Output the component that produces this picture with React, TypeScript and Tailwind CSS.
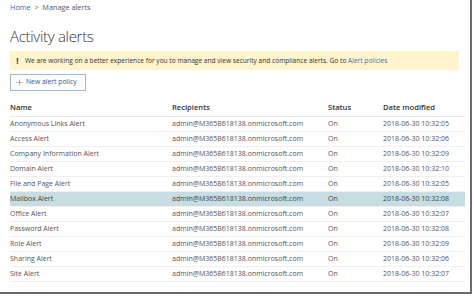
import { Plus } from 'lucide-react';

const alerts = [
  { name: 'Anonymous Links Alert', date: '2018-06-30 10:32:05' },
  { name: 'Access Alert', date: '2018-06-30 10:32:06' },
  { name: 'Company Information Alert', date: '2018-06-30 10:32:09' },
  { name: 'Domain Alert', date: '2018-06-30 10:32:10' },
  { name: 'File and Page Alert', date: '2018-06-30 10:32:05' },
  { name: 'Mailbox Alert', date: '2018-06-30 10:32:08', selected: true },
  { name: 'Office Alert', date: '2018-06-30 10:32:07' },
  { name: 'Password Alert', date: '2018-06-30 10:32:08' },
  { name: 'Role Alert', date: '2018-06-30 10:32:09' },
  { name: 'Sharing Alert', date: '2018-06-30 10:32:06' },
  { name: 'Site Alert', date: '2018-06-30 10:32:07' },
];

const recipient = 'admin@M365B618138.onmicrosoft.com';

export default function App() {
  return (
    <div className="w-[474px] h-[297px] bg-white overflow-hidden" style={{ fontFamily: '"Open Sans", "Noto Sans", sans-serif' }}>
      <div className="w-[472px] h-[294px] border-r-2 border-b-2 border-[#6a6a6a] pl-[10px] pr-[5px]">
        {/* breadcrumb */}
        <div className="flex items-center gap-[4px] pt-[2px] h-[14px] text-[7.3px] leading-none">
          <span className="text-[#1f6fb5]">Home</span>
          <span className="text-[#666] text-[6.5px]">&gt;</span>
          <span className="text-[#555]">Manage alerts</span>
        </div>

        {/* title */}
        <h1 className="mt-[12px] text-[15px] leading-[20px] font-light text-[#333] tracking-[-0.3px]">Activity alerts</h1>

        {/* banner */}
        <div className="mt-[5px] mr-[6px] h-[19px] bg-[#fff4ce] flex items-center text-[6.6px] text-[#333] whitespace-nowrap">
          <span className="w-[15px] text-center font-bold text-[8px]">!</span>
          <span>
            We are working on a better experience for you to manage and view security and compliance alerts. Go to{' '}
            <span className="text-[#2a7ab8]">Alert policies</span>
          </span>
        </div>

        {/* button */}
        <button className="mt-[4px] w-[76px] h-[17px] border border-[#9dbbd8] flex items-center gap-[2px] pl-[4px] text-[6.8px] text-[#2b579a]">
          <Plus size={9} strokeWidth={1.3} className="text-[#3b78b5]" />
          <span>New alert policy</span>
        </button>

        {/* table */}
        <div className="mt-[9px] w-[455px] text-[7px] text-[#555]">
          <div className="grid grid-cols-[162px_156px_55px_1fr] h-[17px] items-center border-b border-[#e6e6e6] text-[7.6px] text-[#333] font-semibold">
            <span>Name</span>
            <span>Recipients</span>
            <span>Status</span>
            <span>Date modified</span>
          </div>
          {alerts.map((a) => (
            <div
              key={a.name}
              className={`grid grid-cols-[162px_156px_55px_1fr] h-[15px] items-center border-b border-[#efefef] ${a.selected ? 'bg-[#c7dde3] text-[#444]' : ''}`}
            >
              <span>{a.name}</span>
              <span>{recipient}</span>
              <span>On</span>
              <span>{a.date}</span>
            </div>
          ))}
        </div>
      </div>
    </div>
  );
}
